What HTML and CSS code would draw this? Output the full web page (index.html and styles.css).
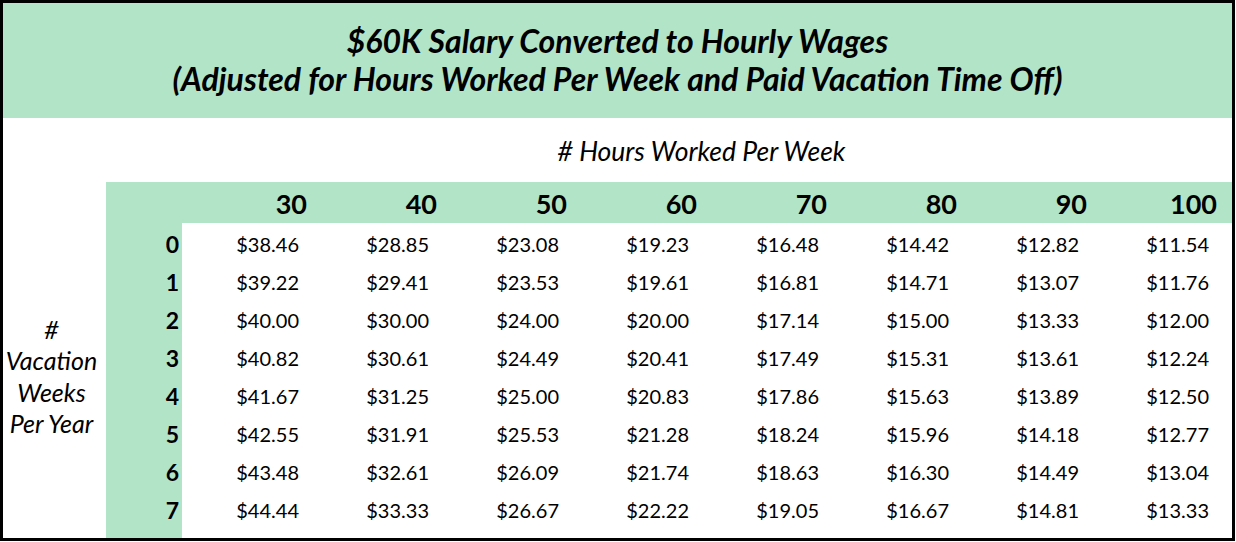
FILE: index.html
```html
<!DOCTYPE html>
<html>
<head>
<meta charset="utf-8">
<link rel="stylesheet" href="styles.css">
</head>
<body>
<div class="sheet">
  <div class="title">
    <div>$60K Salary Converted to Hourly Wages</div>
    <div>(Adjusted for Hours Worked Per Week and Paid Vacation Time Off)</div>
  </div>
  <div class="subtitle"># Hours Worked Per Week</div>
  <div class="tbl">
    <div class="side"><div># <br>Vacation<br>Weeks<br>Per Year</div></div>
    <div class="grid">
      <div class="corner"></div>
      <div class="hd">30</div><div class="hd">40</div><div class="hd">50</div><div class="hd">60</div><div class="hd">70</div><div class="hd">80</div><div class="hd">90</div><div class="hd">100</div><div class="hd-end"></div>

      <div class="rh">0</div>
      <div class="v">$38.46</div><div class="v">$28.85</div><div class="v">$23.08</div><div class="v">$19.23</div><div class="v">$16.48</div><div class="v">$14.42</div><div class="v">$12.82</div><div class="v">$11.54</div><div></div>

      <div class="rh">1</div>
      <div class="v">$39.22</div><div class="v">$29.41</div><div class="v">$23.53</div><div class="v">$19.61</div><div class="v">$16.81</div><div class="v">$14.71</div><div class="v">$13.07</div><div class="v">$11.76</div><div></div>

      <div class="rh">2</div>
      <div class="v">$40.00</div><div class="v">$30.00</div><div class="v">$24.00</div><div class="v">$20.00</div><div class="v">$17.14</div><div class="v">$15.00</div><div class="v">$13.33</div><div class="v">$12.00</div><div></div>

      <div class="rh">3</div>
      <div class="v">$40.82</div><div class="v">$30.61</div><div class="v">$24.49</div><div class="v">$20.41</div><div class="v">$17.49</div><div class="v">$15.31</div><div class="v">$13.61</div><div class="v">$12.24</div><div></div>

      <div class="rh">4</div>
      <div class="v">$41.67</div><div class="v">$31.25</div><div class="v">$25.00</div><div class="v">$20.83</div><div class="v">$17.86</div><div class="v">$15.63</div><div class="v">$13.89</div><div class="v">$12.50</div><div></div>

      <div class="rh">5</div>
      <div class="v">$42.55</div><div class="v">$31.91</div><div class="v">$25.53</div><div class="v">$21.28</div><div class="v">$18.24</div><div class="v">$15.96</div><div class="v">$14.18</div><div class="v">$12.77</div><div></div>

      <div class="rh">6</div>
      <div class="v">$43.48</div><div class="v">$32.61</div><div class="v">$26.09</div><div class="v">$21.74</div><div class="v">$18.63</div><div class="v">$16.30</div><div class="v">$14.49</div><div class="v">$13.04</div><div></div>

      <div class="rh">7</div>
      <div class="v">$44.44</div><div class="v">$33.33</div><div class="v">$26.67</div><div class="v">$22.22</div><div class="v">$19.05</div><div class="v">$16.67</div><div class="v">$14.81</div><div class="v">$13.33</div><div></div>

      <div class="rail"></div>
    </div>
  </div>
</div>
</body>
</html>
```
FILE: styles.css
```css
html, body {
  margin: 0;
  padding: 0;
  background: #ffffff;
}

body {
  font-family: Lato, "Open Sans", "Liberation Sans", sans-serif;
  color: #000000;
}

.sheet {
  width: 1235px;
  height: 541px;
  box-sizing: border-box;
  border: 3px solid #000000;
  display: flex;
  flex-direction: column;
}

.title {
  height: 115px;
  flex: none;
  background: #b2e4c8;
  display: flex;
  flex-direction: column;
  align-items: center;
  justify-content: center;
  padding-bottom: 1px;
  box-sizing: border-box;
  font-size: 32px;
  font-weight: 700;
  font-style: italic;
  line-height: 38px;
}

.subtitle {
  height: 64px;
  flex: none;
  display: flex;
  align-items: center;
  justify-content: center;
  padding-left: 168px;
  padding-top: 2px;
  box-sizing: border-box;
  font-size: 26.5px;
  font-style: italic;
}

.tbl {
  flex: 1;
  display: flex;
}

.side {
  width: 103px;
  flex: none;
  padding-top: 41px;
  padding-bottom: 8px;
  padding-right: 6px;
  box-sizing: border-box;
  display: flex;
  align-items: center;
  justify-content: center;
  text-align: center;
  font-size: 25px;
  font-style: italic;
  line-height: 31.5px;
}

.grid {
  flex: 1;
  display: grid;
  grid-template-columns: 76px repeat(8, 130px) 1fr;
  grid-template-rows: 41px repeat(8, 38px) 1fr;
}

.corner,
.hd,
.hd-end,
.rh,
.rail {
  background: #b2e4c8;
}

.hd {
  display: flex;
  align-items: center;
  justify-content: flex-end;
  padding-right: 5px;
  padding-top: 2px;
  font-size: 27px;
  font-weight: 700;
}

.rh {
  display: flex;
  align-items: center;
  justify-content: flex-end;
  padding-right: 3px;
  padding-top: 4px;
  font-size: 23px;
  font-weight: 700;
}

.v {
  display: flex;
  align-items: center;
  justify-content: flex-end;
  padding-right: 13px;
  padding-top: 4px;
  font-size: 20px;
}
```
